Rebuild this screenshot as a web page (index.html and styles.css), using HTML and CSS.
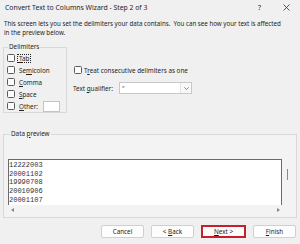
FILE: index.html
```html
<!DOCTYPE html>
<html>
<head>
<meta charset="utf-8">
<link rel="stylesheet" href="styles.css">
</head>
<body>
<div class="window">
  <div class="titlebar">
    <span class="title">Convert Text to Columns Wizard - Step 2 of 3</span>
    <div class="controls">
      <span class="help">?</span>
      <svg class="close" width="7" height="7" viewBox="0 0 7 7"><path d="M0.5 0.5 L6.5 6.5 M6.5 0.5 L0.5 6.5" stroke="#333" stroke-width="0.8" fill="none"/></svg>
    </div>
  </div>
  <p class="desc">This screen lets you set the delimiters your data contains.&nbsp; You can see how your text is affected<br>in the preview below.</p>
  <div class="options">
    <fieldset class="group delims">
      <legend>Delimiters</legend>
      <div class="row"><span class="box"></span><span class="lbl focus"><u>T</u>ab</span></div>
      <div class="row"><span class="box"></span><span class="lbl">Se<u>m</u>icolon</span></div>
      <div class="row"><span class="box"></span><span class="lbl"><u>C</u>omma</span></div>
      <div class="row"><span class="box"></span><span class="lbl"><u>S</u>pace</span></div>
      <div class="row"><span class="box"></span><span class="lbl"><u>O</u>ther:</span><span class="other"></span></div>
    </fieldset>
    <div class="right">
      <div class="row treat"><span class="box"></span><span class="lbl">T<u>r</u>eat consecutive delimiters as one</span></div>
      <div class="qual">
        <span class="qlabel">Text <u>q</u>ualifier:</span>
        <div class="select"><span class="sval">"</span><span class="sbtn"><svg width="5" height="3" viewBox="0 0 5 3"><path d="M0.3 0.3 L2.5 2.5 L4.7 0.3" stroke="#555" stroke-width="0.7" fill="none"/></svg></span></div>
      </div>
    </div>
  </div>
  <fieldset class="group preview">
    <legend>Data <u>p</u>review</legend>
    <div class="pv">
      <div class="viewport">
        <div class="line">12222003</div>
        <div class="line">20001102</div>
        <div class="line">19990708</div>
        <div class="line">20010906</div>
        <div class="line">20001107</div>
      </div>
      <div class="vscroll"><span class="thumb"></span></div>
    </div>
    <div class="hscroll">
      <svg width="3" height="4" viewBox="0 0 3 4"><path d="M3 0 L0 2 L3 4 Z" fill="#888"/></svg>
      <svg width="3" height="4" viewBox="0 0 3 4"><path d="M0 0 L3 2 L0 4 Z" fill="#888"/></svg>
    </div>
  </fieldset>
  <div class="buttons">
    <button class="btn">Cancel</button>
    <button class="btn">&lt; <u>B</u>ack</button>
    <button class="btn next"><u>N</u>ext &gt;</button>
    <button class="btn"><u>F</u>inish</button>
  </div>
</div>
</body>
</html>
```
FILE: styles.css
```css
html, body {
  margin: 0;
  padding: 0;
  background: #f0f0f0;
}
body {
  font-family: "Noto Sans", "Liberation Sans", sans-serif;
  color: #1e1e1e;
  font-size: 6.3px;
}
.window {
  width: 300px;
  height: 244px;
  overflow: hidden;
}
u { text-decoration-thickness: 0.5px; text-underline-offset: 1px; }
.titlebar {
  height: 15px;
  display: flex;
  align-items: center;
  justify-content: space-between;
  padding-left: 5px;
  padding-right: 10px;
}
.title { font-size: 6.85px; }
.controls {
  display: flex;
  align-items: center;
  gap: 22px;
}
.help { font-size: 7px; }
.close { display: block; }
.desc {
  margin: 5px 0 0 4px;
  width: 296px;
  font-size: 6.2px;
  line-height: 8.5px;
  white-space: nowrap;
}
.options {
  display: flex;
  margin-top: 6px;
}
.group {
  margin: 0;
  border: 1px solid #d8d8d8;
  padding: 0;
  min-width: 0;
}
.group legend {
  padding: 0 1px;
  line-height: 8px;
}
.delims {
  margin-left: 3px;
  width: 64px;
  padding: 1px 0 0 3px;
  box-sizing: border-box;
  height: 70px;
}
.delims legend { margin-left: 1px; }
.row {
  display: flex;
  align-items: center;
  height: 12px;
}
.box {
  width: 6px;
  height: 6px;
  border: 1px solid #5c5c5c;
  border-radius: 1.5px;
  background: #fbfbfb;
  flex: none;
}
.lbl { margin-left: 4px; }
.focus {
  outline: 1px dotted #222;
  outline-offset: 0;
  padding: 0 1px;
  margin-left: 3px;
  line-height: 7px;
}
.other {
  width: 17px;
  height: 11px;
  border: 1px solid #c4c4c4;
  background: #fff;
  margin-left: 5px;
  box-sizing: border-box;
}
.right {
  margin-left: 7px;
}
.treat { margin-top: 22px; height: 10px; }
.treat .lbl { margin-left: 2px; }
.qual {
  display: flex;
  align-items: center;
  margin-top: 7px;
  margin-left: -1px;
}
.qlabel { width: 46px; }
.select {
  width: 73px;
  height: 12px;
  box-sizing: border-box;
  border: 1px solid #c8c8c8;
  background: #fff;
  display: flex;
  align-items: center;
  justify-content: space-between;
}
.sval { margin-left: 2px; color: #555; }
.sbtn {
  width: 10px;
  height: 10px;
  display: flex;
  align-items: center;
  justify-content: center;
  border-left: 1px solid #e2e2e2;
  background: #f8f8f8;
}
.sbtn svg { display: block; }
.preview {
  margin: 17px 0 0 3px;
  width: 294px;
  height: 88px;
  box-sizing: border-box;
  padding: 21px 4px 0 4px;
  background: #f3f3f3;
}
.preview legend { margin-left: 2px; }
.pv {
  display: flex;
  height: 46px;
}
.viewport {
  width: 275px;
  box-sizing: border-box;
  background: #fff;
  border: 1px solid #6a6a6a;
  border-bottom: none;
  padding: 1px 0 0 0;
  font-family: "Liberation Mono", "DejaVu Sans Mono", monospace;
  font-size: 7px;
  color: #333;
}
.line { height: 8.7px; line-height: 8.7px; }
.vscroll {
  width: 10px;
  display: flex;
  justify-content: center;
  padding-top: 10px;
}
.thumb {
  width: 1px;
  height: 11px;
  background: #8a8a8a;
}
.hscroll {
  width: 275px;
  height: 10px;
  display: flex;
  align-items: center;
  justify-content: space-between;
  padding: 0 3px 0 3px;
  box-sizing: border-box;
}
.hscroll svg { display: block; }
.buttons {
  display: flex;
  justify-content: flex-end;
  gap: 7px;
  margin-top: 7px;
  padding-right: 4px;
}
.btn {
  width: 43px;
  height: 13px;
  box-sizing: border-box;
  border: 1px solid #d0d0d0;
  border-radius: 2px;
  background: #fdfdfd;
  font-family: "Noto Sans", "Liberation Sans", sans-serif;
  font-size: 6.3px;
  color: #1e1e1e;
  padding: 0;
  line-height: 10px;
}
.next {
  width: 45px;
  border: 2px solid #c8202a;
  border-radius: 0;
}
```
